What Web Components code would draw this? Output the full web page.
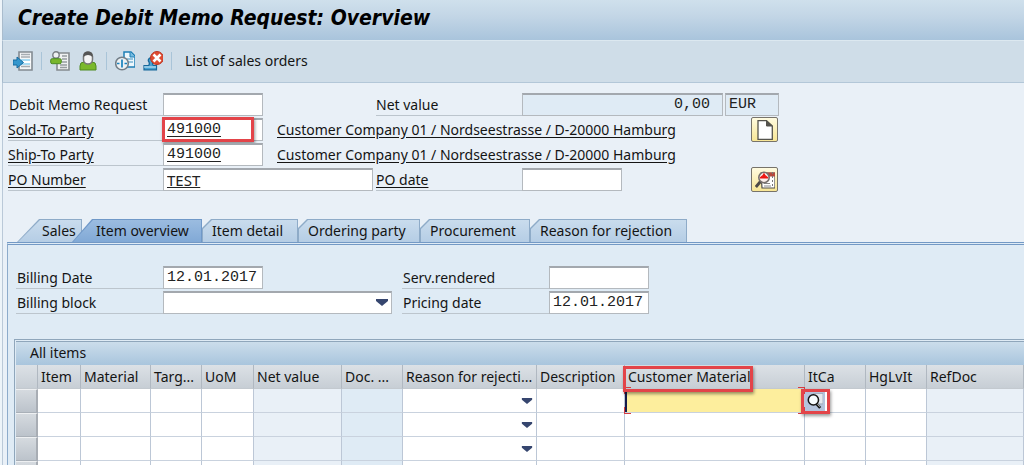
<!DOCTYPE html>
<html lang="en">
<head>
<meta charset="utf-8">
<title>Create Debit Memo Request: Overview</title>
<style>
  html, body { margin: 0; height: 100%; }
  body {
    --ui: "Noto Sans", "DejaVu Sans Condensed", sans-serif;
    --title: "DejaVu Sans Condensed", "Noto Sans", sans-serif;
    --mono: "Liberation Mono", monospace;
    font: 14px/18px var(--ui);
    color: #141414;
    background: #e9f0f7;
    overflow: hidden;
  }
</style>
</head>
<body>
<gui-window>
  <gui-titlebar slot="title">Create Debit Memo Request: Overview</gui-titlebar>
  <gui-toolbar slot="toolbar"></gui-toolbar>

  <gui-form>
    <gui-row columns>
      <gui-field label="Debit Memo Request" indent label-width="155" size="100"></gui-field>
      <gui-field slot="second" label="Net value" label-width="146" size="201" value="0,00" numeric readonly></gui-field>
      <gui-field slot="second" name="Currency" size="54" value="EUR" readonly></gui-field>
    </gui-row>
    <gui-row>
      <gui-field label="Sold-To Party" link label-width="155" size="100" value="491000" underlined marked></gui-field>
      <gui-link slot="second">Customer Company 01 / Nordseestrasse / D-20000 Hamburg</gui-link>
      <gui-button slot="action" icon="page" name="Create"></gui-button>
    </gui-row>
    <gui-row>
      <gui-field label="Ship-To Party" link label-width="155" size="100" value="491000" underlined></gui-field>
      <gui-link slot="second">Customer Company 01 / Nordseestrasse / D-20000 Hamburg</gui-link>
    </gui-row>
    <gui-row columns>
      <gui-field label="PO Number" link label-width="155" size="210" value="TEST" underlined plain></gui-field>
      <gui-field slot="second" label="PO date" link label-width="146" size="100"></gui-field>
      <gui-button slot="action" icon="inspect" name="Display details"></gui-button>
    </gui-row>
  </gui-form>

  <gui-tabs>
    <gui-dates></gui-dates>
    <gui-items></gui-items>
  </gui-tabs>
</gui-window>

<script>
const define = (name, render) => customElements.define(name, class extends HTMLElement {
  connectedCallback() {
    if (this.shadowRoot) return;
    const t = document.createElement('template');
    t.innerHTML = render(this);
    this.attachShadow({ mode: 'open' }).append(t.content.cloneNode(true));
  }
});

const ICONS = {
  enter: `<path d="M6 1h13v18H6z" fill="#f4f6f7" stroke="#838b91" stroke-width="1.6"/>
    <path d="M8 3.5h9M8 6h9M8 15.5h9" stroke="#a6adb2" stroke-width="1.4"/><path d="M8 8h9v6H8z" fill="#a9dcf4"/><path d="M8 11h10" stroke="#fff" stroke-width="2"/>
    <path d="M0 9h4V6l6.500 5.500L4 17v-3H0z" fill="#3597cd" stroke="#176a9f"/>`,
  partner: `<path d="M9 2h10v17H7v-6" fill="#eff1f2" stroke="#858b8f" stroke-width="1.600"/>
    <path d="M12 5h5M12 8h5M12 11h5M10 14h7M10 16.500h7" stroke="#969ca0" stroke-width="1.300"/>
    <circle cx="6" cy="4" r="3.200" fill="#eef1f2" stroke="#777e83" stroke-width="1.400"/><rect x=".7" y="7.700" width="10.600" height="5" rx="1.500" fill="#78b62c" stroke="#4b8923"/>`,
  person: `<path d="M2 19v-4q0-4 4-4h8q4 0 4 4v4z" fill="#7ab82c" stroke="#4e8b20"/>
    <rect x="5.500" y="1" width="9" height="12" rx="4.500" fill="#f5f5f5" stroke="#777" stroke-width="1.500"/><path d="M5.500 6V4q0-3.500 4.500-3.500T14.500 4v2q-2-2-4.500-2T5.500 6z" fill="#555"/>`,
  clock: `<path d="M9 1h7l4 4v11H9z" fill="#edf7fc" stroke="#1e7fb5" stroke-width="1.500"/><path d="M15 1v5h5" fill="#75bce2" stroke="#1e7fb5"/><path d="M12 8h6M12 11h6" stroke="#78b4d3" stroke-width="1.400"/>
    <circle cx="7" cy="12.500" r="6.300" fill="#edf1f4" stroke="#747f88" stroke-width="1.600"/><path d="M7 8.500v8M2 12.500h2.500M9.500 12.500H12" stroke="#1782bd" stroke-width="1.700"/>`,
  stamp: `<path d="M1 18.800v-4.300h4.500q1.500-1 .5-3.500a2.600 2.600 0 1 1 4 0q-1 2.500.5 3.500h3v4.300z" fill="#45a2d3" stroke="#17689a" stroke-width="1.200"/><path d="M1 16h12" stroke="#d9effa"/>
    <circle cx="14" cy="7" r="6.500" fill="#df4c32" stroke="#ba3524"/><path d="M10.500 3.500l7 7M17.500 3.500l-7 7" stroke="#fff" stroke-width="2.600"/>`,
  page: `<path d="M3 .7h8.500L17.300 6v13.300H3z" fill="#fff" stroke="#55534c" stroke-width="1.300"/><path d="M11.500.7V6h5.800z" fill="#55534c" stroke="#55534c"/>`,
  inspect: `<path d="M6 3h14v15H7z" fill="#fff" stroke="#514f49" stroke-width="1.200"/><path d="M6 2.500h14v4H6z" fill="#b6493d"/><path d="M17.500 2v16" stroke="#777" stroke-dasharray="2 2"/><path d="M9 13.500h6M9 16h7" stroke="#888"/>
    <path d="M5.500 11.500L.8 17" stroke="#4e4a48" stroke-width="3"/><circle cx="9" cy="7.500" r="5.200" fill="#fbeeea" stroke="#77706d" stroke-width="1.600"/><path d="M5 8q1-2 2.500-2L9 3.500 10.500 6Q12 6 13 8z" fill="#ee1712" stroke="#ee1712"/>`,
  search: `<path d="M8 0h12v13H8z" fill="#e5e9ef" stroke="#9aa5b5"/><path d="M11 12l5.500 6" stroke="#181818" stroke-width="3.500"/><path d="M12.500 12.500l3.500 4" stroke="#fff"/><circle cx="8" cy="8" r="6.400" fill="#f7fcff" stroke="#151515" stroke-width="1.900"/>`
};

define('gui-icon', el => `<style>:host{display:block;width:20px;height:20px}svg{display:block;width:100%;height:100%}</style>
  <svg viewBox="0 0 20 20" fill="none" aria-hidden="true">${ICONS[el.getAttribute('name')]}</svg>`);

define('gui-window', () => `<style>
  :host{display:flex;flex-direction:column;box-sizing:border-box;height:100vh;overflow:hidden;padding-left:2px;background:#edf4f9}
  main{flex:1;min-height:0;border-left:1px solid #bac9d8;background:#e9f0f7}
  </style><slot name="title"></slot><slot name="toolbar"></slot><main><slot></slot></main>`);

define('gui-titlebar', () => `<style>
  :host{display:block;flex:none;border-left:1px solid #a9bccd;background:linear-gradient(#cfe0ec,#c3d6e6 40%,#a9c4dc)}
  h1{margin:0;height:40px;padding-left:15px;font:italic bold 21px/37px var(--title);color:#000;white-space:nowrap}
  </style><h1><slot></slot></h1>`);

define('gui-toolbar', () => `<style>
  :host{display:flex;flex:none;align-items:center;box-sizing:border-box;height:43px;padding:0 10px 2px;border-left:1px solid #a9bccd;border-top:1px solid #dce8f0;border-bottom:1px solid #b3c7d8;background:#cfdde8}
  button{display:block;margin:0;padding:0;border:0;background:none;color:inherit;font:inherit;white-space:nowrap}
  i{width:1px;height:18px;margin:0 8px;background:#a9c4d8}
  .pair{margin-left:8px}
  .text{margin-left:5px}
  </style>
  <button aria-label="Continue"><gui-icon name="enter"></gui-icon></button><i></i>
  <button aria-label="Header partner"><gui-icon name="partner"></gui-icon></button>
  <button class="pair" aria-label="Display partner"><gui-icon name="person"></gui-icon></button><i></i>
  <button aria-label="Schedule"><gui-icon name="clock"></gui-icon></button>
  <button class="pair" aria-label="Reject document"><gui-icon name="stamp"></gui-icon></button><i></i>
  <button class="text">List of sales orders</button>`);

define('gui-form', () => `<style>:host{display:block;max-width:770px;padding:9px 5px 27px}</style><slot></slot>`);

define('gui-row', () => `<style>
  :host{display:flex;align-items:center;height:25px}
  .first{flex:none;width:269px}
  :host([columns]) .first{width:368px}
  .second{display:flex;gap:2px;flex:none}
  .action{margin-left:auto}
  </style><div class="first"><slot></slot></div>
  <div class="second"><slot name="second"></slot></div>
  <div class="action"><slot name="action"></slot></div>`);

define('gui-field', el => {
  const a = n => el.getAttribute(n) || '';
  const has = n => el.hasAttribute(n);
  return `<style>
  :host{display:flex;position:relative;height:23px}
  label{box-sizing:border-box;flex:none;width:${a('label-width')}px;height:23px;border-bottom:1px solid #bcc5cd;line-height:24px;white-space:nowrap}
  :host([indent]) label{padding-left:1px}
  :host([link]) label{text-decoration:underline;text-underline-offset:2px}
  input{box-sizing:border-box;width:${a('size')}px;height:23px;margin:0;padding:0 3px 2px;border:1px solid #b4b9be;border-top:2px solid #a3a8ae;border-radius:0;background:#fff;color:#222;font:15px/18px var(--mono);outline:0}
  :host([readonly]) input{background:#dfebf5}
  :host([numeric]) input{text-align:right;padding-right:12px}
  :host([underlined]) input{text-decoration:underline;text-underline-offset:3px}
  :host([plain]) input{font:15px/20px var(--ui);padding-bottom:0;text-underline-offset:1px}
  mark{position:absolute;left:${a('label-width')}px;top:0;box-sizing:border-box;width:92px;height:25px;margin:-1px;border:3px solid #e34449;background:none;box-shadow:1px 2px 3px #0006;pointer-events:none}
  </style>
  ${has('label') ? `<label for="f">${a('label')}</label>` : ''}
  <input id="f" value="${a('value')}" ${has('readonly') ? 'readonly' : ''} ${has('name') ? `aria-label="${a('name')}"` : ''}>
  ${has('marked') ? '<mark></mark>' : ''}`;
});

define('gui-link', () => `<style>:host{display:block;white-space:nowrap;line-height:20px}a{color:inherit;text-underline-offset:2px}</style><a href="#"><slot></slot></a>`);

define('gui-button', el => `<style>
  :host{display:block}
  button{display:grid;place-items:center;box-sizing:border-box;width:27px;height:25px;margin:0;padding:0;border:1px solid #77736a;border-radius:2px;background:linear-gradient(#fffbe0,#f8e695)}
  </style><button aria-label="${el.getAttribute('name')}"><gui-icon name="${el.getAttribute('icon')}"></gui-icon></button>`);

define('gui-tabs', () => {
  const tabs = [['Sales', 65, 'sales'], ['Item overview', 130, 'active'], ['Item detail', 96, ''], ['Ordering party', 122, ''], ['Procurement', 110, ''], ['Reason for rejection', 157, '']];
  return `<style>
  :host{display:block;padding-left:4px}
  nav{display:flex;padding-left:10px}
  button{--cut:polygon(0 9px,9px 0,100% 0,100% 100%,0 100%);position:relative;z-index:0;flex:none;height:23px;margin:0;padding:0 0 0 10px;border:0;background:#8eabc8;clip-path:var(--cut);text-align:left;color:inherit;font:inherit;line-height:24px;white-space:nowrap}
  button::before{content:"";position:absolute;z-index:-1;inset:1px 1px 0;clip-path:var(--cut);background:linear-gradient(#c9dced,#b5cde5)}
  .sales{--cut:polygon(0 100%,22px 0,100% 0,100% 100%);padding-left:25px}
  .active{--cut:polygon(0 100%,20px 0,100% 0,100% 100%);margin-left:-10px;padding-left:24px;background:#6f98c8}
  .active::before{background:linear-gradient(#9bbce0,#81a9d6)}
  section{padding:20px 0 0 6px;border-left:1px solid #8cabcb;border-top:3px double #7399c5;background:#dfebf5;min-height:230px}
  </style>
  <nav role="tablist">${tabs.map(([t, w, c]) => `<button role="tab" aria-selected="${c === 'active'}" class="${c}" style="width:${w}px">${t}</button>`).join('')}</nav>
  <section role="tabpanel"><slot></slot></section>`;
});

define('gui-dates', () => `<style>
  :host{display:grid;grid-template-columns:386px auto;justify-content:start;grid-auto-rows:25px;align-items:center;padding:0 0 24px 2px}
  .select{display:flex;position:relative;justify-self:start;height:23px}
  label{box-sizing:border-box;width:147px;height:23px;padding-left:1px;border-bottom:1px solid #bcc5cd;line-height:24px}
  select{appearance:none;box-sizing:border-box;width:229px;height:23px;margin:0;border:1px solid #b4b9be;border-top:2px solid #a3a8ae;border-radius:0;background:#fff;font:inherit}
  svg{position:absolute;right:4px;top:8px;width:12px;height:7px;pointer-events:none}
  </style>
  <gui-field label="Billing Date" indent label-width="147" size="100" value="12.01.2017"></gui-field>
  <gui-field label="Serv.rendered" indent label-width="147" size="100"></gui-field>
  <div class="select"><label for="block">Billing block</label><select id="block"><option></option></select>
    <svg viewBox="0 0 12 7" aria-hidden="true"><path d="M0 0h12v2L6 7 0 2z" fill="#36466f"/></svg></div>
  <gui-field label="Pricing date" indent label-width="147" size="100" value="12.01.2017"></gui-field>`);

define('gui-items', () => {
  const cols = [['', 22], ['Item', 43], ['Material', 70], ['Targ...', 51], ['UoM', 52], ['Net value', 88, 'ro'], ['Doc. ...', 61, 'doc'], ['Reason for rejecti...', 134, 'pick'], ['Description', 88], ['Customer Material', 180], ['ItCa', 61], ['HgLvIt', 61], ['RefDoc', 0, 'ro']];
  const cell = ([t, , c = ''], r, i) => {
    if (!i) return '<th scope="row"></th>';
    const tag = `aria-label="${t} ${r + 1}"`;
    if (c === 'pick') return `<td><select ${tag}><option></option></select><svg viewBox="0 0 12 7" aria-hidden="true"><path d="M0 0h12v2L6 7 0 2z" fill="#36466f"/></svg></td>`;
    const focus = r === 0 && t === 'Customer Material';
    const help = r === 0 && t === 'ItCa';
    return `<td class="${c} ${focus ? 'focus' : ''}"><input ${tag} ${c ? 'readonly' : ''}>${focus ? '<i class="a"></i><i class="b"></i><i class="c"></i><i class="d"></i>' : ''}${help ? '<button aria-label="Search help"><gui-icon name="search"></gui-icon></button><mark></mark>' : ''}</td>`;
  };
  return `<style>
  :host{display:block;border:1px solid #8fa6bb;border-right:0;padding:1px 0 0 1px}
  h2{margin:0;height:24px;padding-left:14px;border-top:1px solid #8fa6bb;box-sizing:border-box;font:inherit;line-height:22px;background:linear-gradient(#cbddeb,#a9c5dd)}
  table{width:100%;table-layout:fixed;border-collapse:separate;border-spacing:0}
  th,td{position:relative;box-sizing:border-box;height:24px;padding:0;border-right:1px solid #bcc7d6;border-bottom:1px solid #c9d2de;background:#fff}
  thead th{padding-left:3px;border-right-color:#b0b8c1;border-bottom-color:#c3c9cf;background:linear-gradient(#dce1e6,#c7ced5);font-weight:normal;text-align:left;white-space:nowrap;line-height:22px}
  tbody th{border-right:2px solid #a8adb4;border-bottom-color:#a9b0b8;border-top:1px solid #eef0f2;background:linear-gradient(#d5dadf,#bcc3cb)}
  .ro,.ro input{background:#e9f0f7}
  .doc,.doc input{background:#dfebf5}
  input,select{display:block;appearance:none;box-sizing:border-box;width:100%;height:23px;margin:0;padding:0 3px;border:0;border-radius:0;background:#fff;font:15px/18px var(--mono);outline:0}
  svg{position:absolute;right:3px;top:9px;width:12px;height:6px;pointer-events:none}
  .focus input{border-left:2px solid #161c4c;background:#fdee9d}
  .focus i{position:absolute;z-index:1;width:6px;height:6px;border:0 solid #d63c40}
  .focus .a{left:-1px;top:-2px;border-width:1px 0 0 1px}
  .focus .b{right:-1px;top:-2px;border-width:1px 1px 0 0}
  .focus .c{left:-1px;bottom:-2px;border-width:0 0 1px 1px}
  .focus .d{right:-1px;bottom:-2px;border-width:0 1px 1px 0}
  td button{position:absolute;left:0;top:2px;margin:0;padding:1px 2px;border:0;background:#b4c3dc;width:20px;height:20px}
  td gui-icon{width:16px;height:17px}
  mark{position:absolute;box-sizing:border-box;border:3px solid #e34449;background:none;box-shadow:1px 2px 3px #0006;pointer-events:none;z-index:2}
  td mark{left:-4px;top:0;width:29px;height:25px}
  th mark{left:-2px;top:1px;width:130px;height:26px}
  </style>
  <h2 id="t">All items</h2>
  <table aria-labelledby="t"><colgroup>${cols.map(c => `<col${c[1] ? ` style="width:${c[1]}px"` : ''}>`).join('')}</colgroup>
  <thead><tr>${cols.map(([t]) => `<th scope="col">${t}${t === 'Customer Material' ? '<mark></mark>' : ''}</th>`).join('')}</tr></thead>
  <tbody>${[0, 1, 2, 3].map(r => `<tr>${cols.map((c, i) => cell(c, r, i)).join('')}</tr>`).join('')}</tbody></table>`;
});
</script>
</body>
</html>
